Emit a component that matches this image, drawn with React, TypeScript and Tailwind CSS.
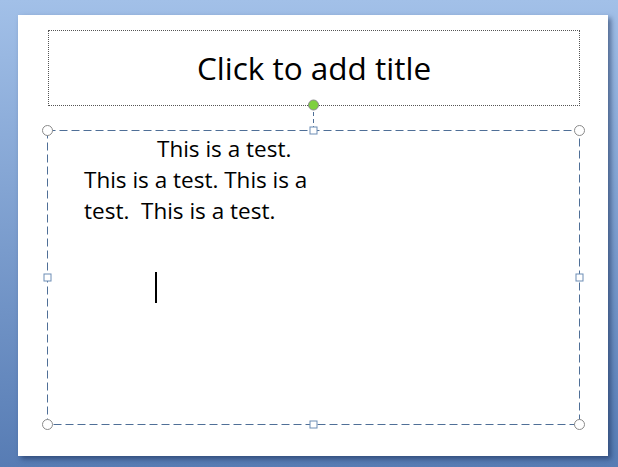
export default function App() {
  return (
    <div className="w-[618px] h-[467px] overflow-hidden bg-gradient-to-b from-[#a2c0e8] to-[#577cb4] pl-[18px] pt-[15px]" style={{ fontFamily: "'Open Sans', Lato, sans-serif" }}>
      <div className="relative w-[590px] h-[441px] bg-white shadow-[3px_3px_5px_rgba(20,40,80,0.55)] pt-[15px] pl-[30px]">
        <div className="w-[532px] h-[76px] border border-dotted border-[#555] flex items-center justify-center">
          <span className="text-[31.5px] text-black leading-none [font-variant-ligatures:none]">Click to add title</span>
        </div>
        <div className="relative ml-[-1px] mt-[24px] w-[533px] h-[295px]">
          <svg className="absolute -left-[10px] -top-[35px] overflow-visible" width="553" height="340" viewBox="-10 -35 553 340">
            <rect x="0.5" y="0.5" width="532" height="294" fill="none" stroke="#4f6f97" strokeWidth="1" strokeDasharray="8 4" />
            <line x1="266.5" y1="-25" x2="266.5" y2="0" stroke="#4f6f97" strokeDasharray="4 3" />
            <circle cx="266.5" cy="-25" r="5" fill="#7ed03e" stroke="#8a8a8a" />
            {[[0.5, 0.5], [532.5, 0.5], [0.5, 294.5], [532.5, 294.5]].map(([x, y], i) => (
              <circle key={i} cx={x} cy={y} r="5" fill="#fff" stroke="#8a8a8a" />
            ))}
            {[[266.5, 0.5], [266.5, 294.5], [0.5, 147.5], [532.5, 147.5]].map(([x, y], i) => (
              <rect key={i} x={x - 3.5} y={y - 3.5} width="7" height="7" fill="#fff" stroke="#6d8db5" />
            ))}
          </svg>
          <div className="relative pt-[3px] pl-[37px] text-[22.5px] leading-[31px] text-black whitespace-pre [font-variant-ligatures:none]">
            <div className="pl-[73px]">This is a test.</div>
            <div>This is a test. This is a</div>
            <div>test.  This is a test.</div>
          </div>
          <div className="absolute left-[108px] top-[142px] w-[1.5px] h-[31px] bg-black" />
        </div>
      </div>
    </div>
  );
}
